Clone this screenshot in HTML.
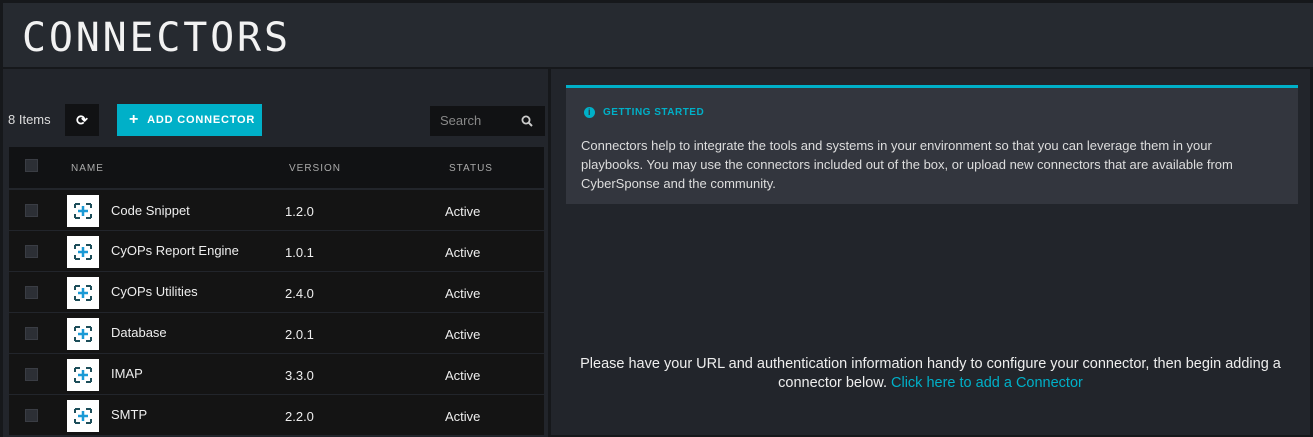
<!DOCTYPE html>
<html><head><style>
*{box-sizing:border-box;margin:0;padding:0}
body{width:1313px;height:437px;background:#16181b;font-family:"Liberation Sans",sans-serif;color:#e6e6e6;position:relative;overflow:hidden}
.hdr{position:absolute;left:3px;top:3px;width:1310px;height:64px;background:#262a30}
.hdr h1{position:absolute;left:19px;top:12px;font-size:40px;font-weight:normal;letter-spacing:2.8px;color:#f2f2f2;font-family:"DejaVu Sans Mono","Liberation Mono",monospace}
.left{position:absolute;left:3px;top:69px;width:545px;height:368px;background:#22252b}
.right{position:absolute;left:551px;top:69px;width:759px;height:366px;background:#22252b}
.items{position:absolute;left:8px;top:112px;font-size:13px;color:#ddd}
.ref{position:absolute;left:65px;top:104px;width:34px;height:32px;background:#111214;color:#fff;font-size:14px;text-align:center;line-height:32px;font-weight:bold}
.add{position:absolute;left:117px;top:104px;width:145px;height:32px;background:#00b0c8;color:#fff;font-size:11px;font-weight:bold;letter-spacing:.8px;line-height:32px;padding-left:12px}
.add b{font-size:16px;margin-right:8px;vertical-align:-1px}
.search{position:absolute;left:430px;top:106px;width:115px;height:30px;background:#111214;color:#888;font-size:13px;line-height:30px;padding-left:10px}
.search svg{position:absolute;right:12px;top:9px}
.th{position:absolute;left:9px;top:147px;width:535px;height:41px;background:#111214;font-size:10px;letter-spacing:1px;color:#aaa}
.th span,.row span{position:absolute}
.cb{position:absolute;width:13px;height:13px;background:#2c2f35;border:1px solid #3a3d44}
.row{position:absolute;left:9px;width:535px;height:40px;background:#141414;font-size:13px;color:#eee}
.ico{position:absolute;left:58px;top:5px;width:32px;height:32px;background:#fff}
.info{position:absolute;left:566px;top:85px;width:732px;height:119px;background:#33363e;border-top:3px solid #00b0c8}
.info h3{position:absolute;left:18px;top:19px;font-size:10px;color:#00b0c8;letter-spacing:.5px}
.info h3 i{display:inline-block;width:11px;height:11px;border-radius:50%;background:#00b0c8;color:#33363e;font-style:normal;font-size:9px;text-align:center;line-height:11px;margin-right:8px}
.info p{position:absolute;left:15px;top:48px;width:685px;font-size:13px;line-height:19px;color:#ddd}
.bot{position:absolute;left:551px;top:355px;width:759px;text-align:center;font-size:14.5px;line-height:19px;color:#eee}
.bot a{color:#00b0c8;text-decoration:none}
</style></head><body>
<div class="hdr"><h1>CONNECTORS</h1></div>
<div class="left"></div><div class="right"></div>
<div class="items">8 Items</div>
<div class="ref">⟳</div>
<div class="add"><b>+</b>ADD CONNECTOR</div>
<div class="search">Search<svg width="12" height="12" viewBox="0 0 12 12"><circle cx="5" cy="5" r="3.6" fill="none" stroke="#ccc" stroke-width="1.8"/><path d="M7.7 7.7L11 11" stroke="#ccc" stroke-width="2"/></svg></div>
<div class="th"><div class="cb" style="left:16px;top:12px"></div><span style="left:62px;top:16px">NAME</span><span style="left:280px;top:16px">VERSION</span><span style="left:440px;top:16px">STATUS</span></div>
<div class="row" style="top:190px"><div class="cb" style="left:16px;top:14px"></div><div class="ico"><svg width="32" height="32" viewBox="0 0 32 32"><path d="M8 9h5M8 9v4M24 9h-5M24 9v4M8 23h5M8 23v-4M24 23h-5M24 23v-4" stroke="#1d4e5a" stroke-width="2" fill="none"/><path d="M16 11v10M11 16h10" stroke="#1a9ad6" stroke-width="2.5"/></svg></div><span style="left:102px;top:13px">Code Snippet</span><span style="left:276px;top:14px">1.2.0</span><span style="left:436px;top:14px">Active</span></div>
<div class="row" style="top:231px"><div class="cb" style="left:16px;top:14px"></div><div class="ico"><svg width="32" height="32" viewBox="0 0 32 32"><path d="M8 9h5M8 9v4M24 9h-5M24 9v4M8 23h5M8 23v-4M24 23h-5M24 23v-4" stroke="#1d4e5a" stroke-width="2" fill="none"/><path d="M16 11v10M11 16h10" stroke="#1a9ad6" stroke-width="2.5"/></svg></div><span style="left:102px;top:12px">CyOPs Report Engine</span><span style="left:276px;top:14px">1.0.1</span><span style="left:436px;top:14px">Active</span></div>
<div class="row" style="top:272px"><div class="cb" style="left:16px;top:14px"></div><div class="ico"><svg width="32" height="32" viewBox="0 0 32 32"><path d="M8 9h5M8 9v4M24 9h-5M24 9v4M8 23h5M8 23v-4M24 23h-5M24 23v-4" stroke="#1d4e5a" stroke-width="2" fill="none"/><path d="M16 11v10M11 16h10" stroke="#1a9ad6" stroke-width="2.5"/></svg></div><span style="left:102px;top:12px">CyOPs Utilities</span><span style="left:276px;top:14px">2.4.0</span><span style="left:436px;top:14px">Active</span></div>
<div class="row" style="top:313px"><div class="cb" style="left:16px;top:14px"></div><div class="ico"><svg width="32" height="32" viewBox="0 0 32 32"><path d="M8 9h5M8 9v4M24 9h-5M24 9v4M8 23h5M8 23v-4M24 23h-5M24 23v-4" stroke="#1d4e5a" stroke-width="2" fill="none"/><path d="M16 11v10M11 16h10" stroke="#1a9ad6" stroke-width="2.5"/></svg></div><span style="left:102px;top:12px">Database</span><span style="left:276px;top:14px">2.0.1</span><span style="left:436px;top:14px">Active</span></div>
<div class="row" style="top:354px"><div class="cb" style="left:16px;top:14px"></div><div class="ico"><svg width="32" height="32" viewBox="0 0 32 32"><path d="M8 9h5M8 9v4M24 9h-5M24 9v4M8 23h5M8 23v-4M24 23h-5M24 23v-4" stroke="#1d4e5a" stroke-width="2" fill="none"/><path d="M16 11v10M11 16h10" stroke="#1a9ad6" stroke-width="2.5"/></svg></div><span style="left:102px;top:12px">IMAP</span><span style="left:276px;top:14px">3.3.0</span><span style="left:436px;top:14px">Active</span></div>
<div class="row" style="top:395px"><div class="cb" style="left:16px;top:14px"></div><div class="ico"><svg width="32" height="32" viewBox="0 0 32 32"><path d="M8 9h5M8 9v4M24 9h-5M24 9v4M8 23h5M8 23v-4M24 23h-5M24 23v-4" stroke="#1d4e5a" stroke-width="2" fill="none"/><path d="M16 11v10M11 16h10" stroke="#1a9ad6" stroke-width="2.5"/></svg></div><span style="left:102px;top:12px">SMTP</span><span style="left:276px;top:14px">2.2.0</span><span style="left:436px;top:14px">Active</span></div>
<div class="info"><h3><i>i</i>GETTING STARTED</h3><p>Connectors help to integrate the tools and systems in your environment so that you can leverage them in your playbooks. You may use the connectors included out of the box, or upload new connectors that are available from CyberSponse and the community.</p></div>
<div class="bot">Please have your URL and authentication information handy to configure your connector, then begin adding a<br>connector below. <a>Click here to add a Connector</a></div>
</body></html>
